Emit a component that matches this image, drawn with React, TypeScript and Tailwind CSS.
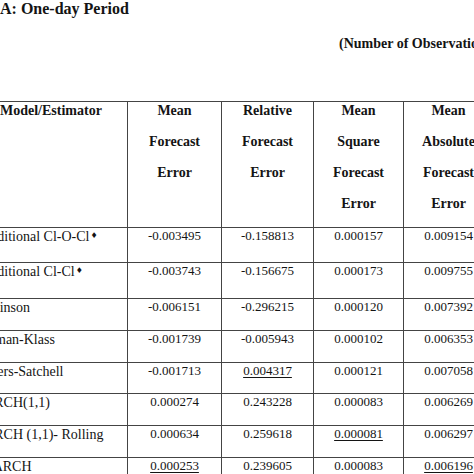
import React from 'react';

type Cell = { v: string; u?: boolean };
type Row = { label: string; mark?: boolean; h: string; cells: Cell[] };

const heads: string[][] = [
  ['Mean', 'Forecast', 'Error'],
  ['Relative', 'Forecast', 'Error'],
  ['Mean', 'Square', 'Forecast', 'Error'],
  ['Mean', 'Absolute', 'Forecast', 'Error'],
];

const rows: Row[] = [
  { label: 'Conditional Cl-O-Cl', mark: true, h: 'h-[35px]', cells: [{ v: '-0.003495' }, { v: '-0.158813' }, { v: '0.000157' }, { v: '0.009154' }] },
  { label: 'Conditional Cl-Cl', mark: true, h: 'h-[36px]', cells: [{ v: '-0.003743' }, { v: '-0.156675' }, { v: '0.000173' }, { v: '0.009755' }] },
  { label: 'Parkinson', h: 'h-[32px]', cells: [{ v: '-0.006151' }, { v: '-0.296215' }, { v: '0.000120' }, { v: '0.007392' }] },
  { label: 'Garman-Klass', h: 'h-[32px]', cells: [{ v: '-0.001739' }, { v: '-0.005943' }, { v: '0.000102' }, { v: '0.006353' }] },
  { label: 'Rogers-Satchell', h: 'h-[31px]', cells: [{ v: '-0.001713' }, { v: '0.004317', u: true }, { v: '0.000121' }, { v: '0.007058' }] },
  { label: 'GARCH(1,1)', h: 'h-[32px]', cells: [{ v: '0.000274' }, { v: '0.243228' }, { v: '0.000083' }, { v: '0.006269' }] },
  { label: 'GARCH (1,1)- Rolling', h: 'h-[32px]', cells: [{ v: '0.000634' }, { v: '0.259618' }, { v: '0.000081', u: true }, { v: '0.006297' }] },
  { label: 'EGARCH', h: 'h-[32px]', cells: [{ v: '0.000253', u: true }, { v: '0.239605' }, { v: '0.000083' }, { v: '0.006196', u: true }] },
];

export default function App() {
  return (
    <div className="w-[474px] h-[474px] overflow-hidden bg-white text-[#141414] font-['Liberation_Serif',serif]">
      <div className="h-[36px] text-[16px] leading-[18px] font-bold whitespace-nowrap">A: One-day Period</div>
      <div className="h-[65px] pl-[339px] text-[14px] leading-[16px] font-bold whitespace-nowrap">
        (Number of Observations: 2,764)
      </div>

      <table className="-ml-[27px] table-fixed border-collapse w-[609px]">
        <colgroup>
          <col className="w-[154px]" />
          <col className="w-[94px]" />
          <col className="w-[92px]" />
          <col className="w-[90px]" />
          <col className="w-[90px]" />
          <col className="w-[89px]" />
        </colgroup>
        <thead>
          <tr className="h-[126px]">
            <th className="border border-[#444] align-top pt-[1px] pl-[26px] text-left text-[14px] leading-[16px] font-bold whitespace-nowrap">
              Model/Estimator
            </th>
            {heads.map((lines, i) => (
              <th key={i} className="border border-[#444] align-top pt-[1px] text-center text-[14px] font-bold">
                <div className="flex flex-col items-center gap-[15px]">
                  {lines.map((l) => (
                    <span key={l} className="leading-[16px] whitespace-nowrap">{l}</span>
                  ))}
                </div>
              </th>
            ))}
            <th className="border border-[#444]"></th>
          </tr>
        </thead>
        <tbody>
          {rows.map((r) => (
            <tr key={r.label} className={r.h}>
              <td className="border border-[#444] align-top pl-0 pt-[1px] text-[14px] leading-[15px] whitespace-nowrap">
                {r.label}
                {r.mark && (
                  <sup className="text-[8px] relative -top-[3px] ml-[1px] font-['DejaVu_Sans',sans-serif]">♦</sup>
                )}
              </td>
              {r.cells.map((c, i) => (
                <td key={i} className="border border-[#444] align-top text-center text-[13px] leading-[15px]">
                  <span className={c.u ? 'underline underline-offset-2' : ''}>{c.v}</span>
                </td>
              ))}
              <td className="border border-[#444]"></td>
            </tr>
          ))}
        </tbody>
      </table>
    </div>
  );
}
